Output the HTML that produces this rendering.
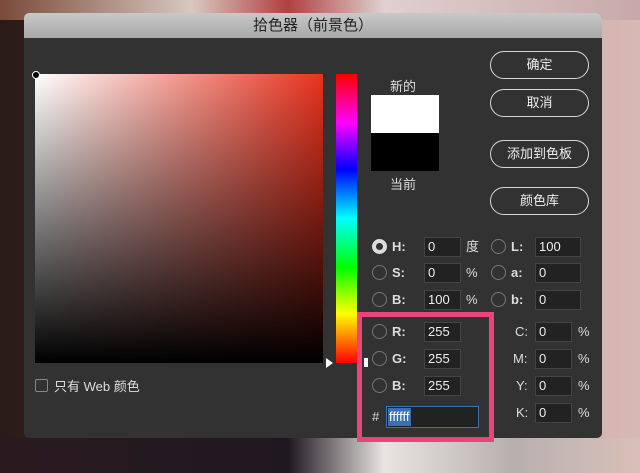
<!DOCTYPE html>
<html><head><meta charset="utf-8"><style>
*{margin:0;padding:0;box-sizing:border-box}
body{width:640px;height:473px;overflow:hidden;position:relative;font-family:"Liberation Sans","Noto Sans CJK SC",sans-serif;
background:linear-gradient(90deg,#2a1a18 0%,#3a2624 20%,#6a4a48 45%,#c9a8a8 70%,#d8b8b4 100%);}
.bgtop{position:absolute;left:0;top:0;width:640px;height:20px;background:linear-gradient(90deg,#7a4a3a,#d8c8c0 30%,#b04040 45%,#e0d0d0 60%,#c8a8a8 100%)}
.bgbot{position:absolute;left:0;top:438px;width:640px;height:35px;background:linear-gradient(90deg,#2a1a20 0%,#201820 45%,#e8e4e2 60%,#b8b0ae 80%,#d8c0b8 100%)}
.dlg{position:absolute;left:24px;top:13px;width:578px;height:425px;background:#323232;border-radius:5px;overflow:hidden}
.title{height:25px;background:linear-gradient(#c8c8c8,#a8a8a8);text-align:center;font-size:15px;line-height:25px;color:#222}
.abs{position:absolute}
.field{left:11px;top:61px;width:288px;height:289px;background:linear-gradient(to bottom,rgba(0,0,0,0),#000),linear-gradient(to right,#fff,#e8321e)}
.hue{left:312px;top:61px;width:21px;height:289px;background:linear-gradient(to bottom,#f00 0%,#f0f 17%,#00f 33%,#0ff 50%,#0f0 67%,#ff0 83%,#f00 100%)}
.btn{left:466px;width:99px;height:28px;border:1.5px solid #d8d8d8;border-radius:14px;color:#eee;font-size:13px;text-align:center;line-height:25px}
.lbl{color:#ddd;font-size:13px;line-height:16px}
.in{width:37px;height:20px;background:#222;border:1px solid #444;color:#eee;font-size:13px;line-height:18px;padding-left:3px}
.rad{width:15px;height:15px;border:1px solid #777;border-radius:50%}
</style></head><body>
<div class="bgtop"></div><div class="bgbot"></div>
<div class="dlg">
<div class="title">拾色器（前景色）</div>
<div class="abs field"></div>
<div class="abs" style="left:11px;top:61px;width:8px;height:8px;border:1.5px solid #fff;border-radius:50%;background:#000;transform:translate(-3px,-3px)"></div>
<div class="abs hue"></div>
<div class="abs" style="left:302px;top:345px;width:0;height:0;border-left:7px solid #fff;border-top:5px solid transparent;border-bottom:5px solid transparent"></div>
<div class="abs" style="left:340px;top:345px;width:4px;height:9px;background:#fff"></div>
<div class="abs lbl" style="left:366px;top:66px">新的</div>
<div class="abs" style="left:347px;top:82px;width:68px;height:38px;background:#fff"></div>
<div class="abs" style="left:347px;top:120px;width:68px;height:38px;background:#000"></div>
<div class="abs lbl" style="left:366px;top:164px">当前</div>
<div class="abs btn" style="top:38px">确定</div>
<div class="abs btn" style="top:76px">取消</div>
<div class="abs btn" style="top:127px">添加到色板</div>
<div class="abs btn" style="top:174px">颜色库</div>
<div class="abs rad" style="left:348px;top:226px;border:4px solid #ddd"></div>
<div class="abs lbl" style="left:368px;top:226px;font-weight:bold">H:</div>
<div class="abs in" style="left:400px;top:224px">0</div>
<div class="abs lbl" style="left:442px;top:226px">度</div>
<div class="abs rad" style="left:348px;top:252px"></div>
<div class="abs lbl" style="left:368px;top:252px;font-weight:bold">S:</div>
<div class="abs in" style="left:400px;top:250px">0</div>
<div class="abs lbl" style="left:442px;top:252px">%</div>
<div class="abs rad" style="left:348px;top:279px"></div>
<div class="abs lbl" style="left:368px;top:279px;font-weight:bold">B:</div>
<div class="abs in" style="left:400px;top:277px">100</div>
<div class="abs lbl" style="left:442px;top:279px">%</div>
<div class="abs rad" style="left:467px;top:226px"></div>
<div class="abs lbl" style="left:487px;top:226px;font-weight:bold">L:</div>
<div class="abs in" style="left:511px;top:224px;width:46px">100</div>
<div class="abs rad" style="left:467px;top:252px"></div>
<div class="abs lbl" style="left:487px;top:252px;font-weight:bold">a:</div>
<div class="abs in" style="left:511px;top:250px;width:46px">0</div>
<div class="abs rad" style="left:467px;top:279px"></div>
<div class="abs lbl" style="left:487px;top:279px;font-weight:bold">b:</div>
<div class="abs in" style="left:511px;top:277px;width:46px">0</div>
<div class="abs rad" style="left:348px;top:311px"></div>
<div class="abs lbl" style="left:368px;top:311px;font-weight:bold">R:</div>
<div class="abs in" style="left:400px;top:309px">255</div>
<div class="abs rad" style="left:348px;top:338px"></div>
<div class="abs lbl" style="left:368px;top:338px;font-weight:bold">G:</div>
<div class="abs in" style="left:400px;top:336px">255</div>
<div class="abs rad" style="left:348px;top:365px"></div>
<div class="abs lbl" style="left:368px;top:365px;font-weight:bold">B:</div>
<div class="abs in" style="left:400px;top:363px">255</div>
<div class="abs lbl" style="left:348px;top:396px">#</div>
<div class="abs" style="left:362px;top:393px;width:93px;height:22px;background:#222;border:1px solid #3a6fb0"><span style="display:inline-block;background:#3a6fb0;color:#fff;font-size:13px;line-height:18px;padding:0 1px;margin:1px">ffffff</span></div>
<div class="abs lbl" style="left:491px;top:311px">C:</div><div class="abs in" style="left:511px;top:309px">0</div><div class="abs lbl" style="left:554px;top:311px">%</div>
<div class="abs lbl" style="left:489px;top:338px">M:</div><div class="abs in" style="left:511px;top:336px">0</div><div class="abs lbl" style="left:554px;top:338px">%</div>
<div class="abs lbl" style="left:492px;top:365px">Y:</div><div class="abs in" style="left:511px;top:363px">0</div><div class="abs lbl" style="left:554px;top:365px">%</div>
<div class="abs lbl" style="left:492px;top:392px">K:</div><div class="abs in" style="left:511px;top:390px">0</div><div class="abs lbl" style="left:554px;top:392px">%</div>
<div class="abs" style="left:11px;top:366px;width:13px;height:13px;border:1px solid #888;border-radius:2px"></div>
<div class="abs lbl" style="left:30px;top:366px;font-size:13px">只有 Web 颜色</div>
</div>
<div class="abs" style="left:357px;top:312px;width:137px;height:130px;border:5px solid #e8457a"></div>
</body></html>
